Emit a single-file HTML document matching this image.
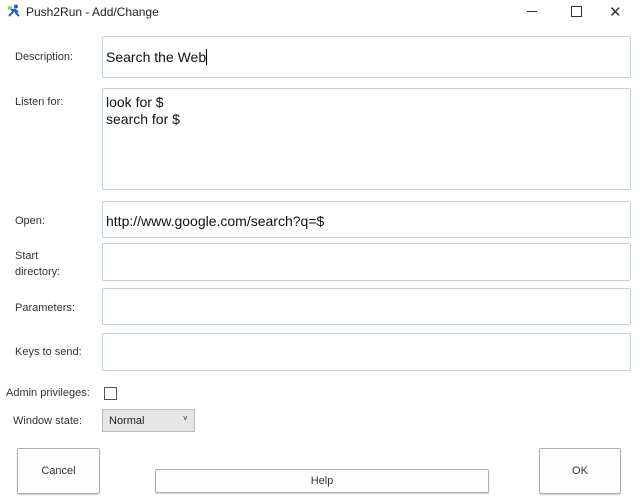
<!DOCTYPE html><html><head><style>
body{margin:0;width:640px;height:499px;background:#fff;font-family:"Liberation Sans",sans-serif;position:relative;overflow:hidden;color:#222}
.a{position:absolute}
.l{font-size:11px;color:#333}
.b{position:absolute;left:102px;width:529px;border:1px solid #c3d1df;border-radius:2px;box-sizing:border-box;font-size:14px;color:#111;padding:3px 3px}
.btn{position:absolute;border:1px solid #b0b0b0;border-radius:2px;box-sizing:border-box;background:#fdfdfd;font-size:11px;display:flex;align-items:center;justify-content:center;color:#333;box-shadow:0 1px 1px #ccc}
</style></head><body>
<svg class="a" style="left:7px;top:4px" width="14" height="14" viewBox="0 0 14 14"><circle cx="9" cy="2.5" r="2" fill="#2a5bd7"/><path d="M8 5 L5 9 L2 12 M8 5 L9 9 L12 12 M7 6 L4 6 M8 6 L11 8" stroke="#2a5bd7" stroke-width="2" fill="none"/><circle cx="3" cy="4" r="2" fill="#7ccf6a"/></svg>
<div class="a" style="left:26px;top:5px;font-size:12px;color:#222">Push2Run - Add/Change</div>
<div class="a" style="left:527px;top:11px;width:10px;height:1px;background:#333"></div>
<div class="a" style="left:571px;top:6px;width:9px;height:9px;border:1px solid #333"></div>
<div class="a" style="left:609px;top:3px;font-size:15px;color:#333">✕</div>
<div class="a l" style="left:15px;top:51px">Description:</div>
<div class="b" style="top:36px;height:42px;padding-top:12px">Search the Web<span style="border-left:1px solid #000;margin-left:0"></span></div>
<div class="a l" style="left:15px;top:96px">Listen for:</div>
<div class="b" style="top:88px;height:102px;line-height:17px;padding-top:5px">look for $<br>search for $</div>
<div class="a l" style="left:15px;top:215px">Open:</div>
<div class="b" style="top:201px;height:37px;padding-top:11px">http://www.google.com/search?q=$</div>
<div class="a l" style="left:15px;top:248px;line-height:16px">Start<br>directory:</div>
<div class="b" style="top:243px;height:38px"></div>
<div class="a l" style="left:15px;top:302px">Parameters:</div>
<div class="b" style="top:288px;height:37px"></div>
<div class="a l" style="left:15px;top:346px">Keys to send:</div>
<div class="b" style="top:333px;height:38px"></div>
<div class="a l" style="left:6px;top:387px">Admin privileges:</div>
<div class="a" style="left:104px;top:387px;width:11px;height:11px;border:1px solid #555"></div>
<div class="a l" style="left:13px;top:415px">Window state:</div>
<div class="a" style="left:102px;top:409px;width:93px;height:23px;box-sizing:border-box;border:1px solid #bbb;background:#e6e6e6;font-size:11px;padding:5px 6px">Normal<span style="position:absolute;left:80px;top:4px;font-size:8px">˅</span></div>
<div class="btn" style="left:17px;top:448px;width:83px;height:46px">Cancel</div>
<div class="btn" style="left:155px;top:469px;width:334px;height:24px">Help</div>
<div class="btn" style="left:539px;top:448px;width:82px;height:46px">OK</div>
</body></html>
